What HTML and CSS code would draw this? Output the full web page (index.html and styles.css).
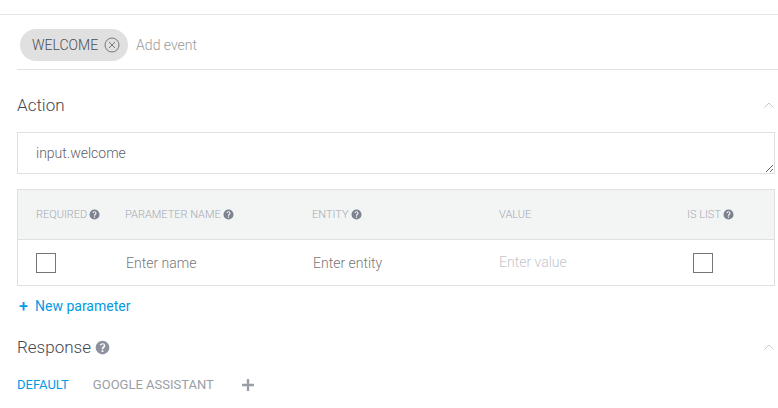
FILE: index.html
```html
<!DOCTYPE html>
<html lang="en">
<head>
  <meta charset="UTF-8">
  <meta name="viewport" content="width=device-width, initial-scale=1.0">
  <title>Intent</title>
  <link rel="stylesheet" href="styles.css">
</head>
<body>
  <div class="events">
    <div class="chips">
      <span class="chip">WELCOME
        <svg class="chip-close" width="16" height="16" viewBox="0 0 16 16"><circle cx="8" cy="8" r="7"/><path d="M5 5l6 6M11 5l-6 6"/></svg>
      </span>
      <span class="add-event">Add event</span>
    </div>
  </div>

  <div class="section-head action-head">
    <h2 class="section-title">Action</h2>
    <svg class="chevron" width="12" height="7" viewBox="0 0 12 7"><path d="M1.5 5.5L6 1l4.5 4.5"/></svg>
  </div>

  <textarea class="action-input" spellcheck="false">input.welcome</textarea>

  <div class="params">
    <div class="row row-head">
      <div class="cell">REQUIRED<svg class="help" viewBox="0 0 24 24"><use href="#q"/></svg></div>
      <div class="cell">PARAMETER NAME<svg class="help" viewBox="0 0 24 24"><use href="#q"/></svg></div>
      <div class="cell">ENTITY<svg class="help" viewBox="0 0 24 24"><use href="#q"/></svg></div>
      <div class="cell">VALUE</div>
      <div class="cell cell-list-head">IS LIST<svg class="help" viewBox="0 0 24 24"><use href="#q"/></svg></div>
    </div>
    <div class="row row-body">
      <div class="cell"><span class="box"></span></div>
      <div class="cell cell-text">Enter name</div>
      <div class="cell cell-text">Enter entity</div>
      <div class="cell cell-value">Enter value</div>
      <div class="cell cell-list"><span class="box"></span></div>
    </div>
  </div>

  <a class="new-param" href="#"><span class="plus">+</span>New parameter</a>

  <div class="section-head response-head">
    <h2 class="section-title">Response<svg class="help help-big" viewBox="0 0 24 24"><use href="#q"/></svg></h2>
    <svg class="chevron" width="12" height="7" viewBox="0 0 12 7"><path d="M1.5 5.5L6 1l4.5 4.5"/></svg>
  </div>

  <div class="tabs">
    <span class="tab active">DEFAULT</span>
    <span class="tab">GOOGLE ASSISTANT</span>
    <svg class="tab-add" width="14" height="14" viewBox="0 0 14 14"><path d="M7 1v12M1 7h12"/></svg>
  </div>

  <svg width="0" height="0" class="defs">
    <symbol id="q" viewBox="0 0 24 24">
      <path fill-rule="evenodd" d="M12 1a11 11 0 1 0 0 22 11 11 0 0 0 0-22zm-1.4 18v-2.8h2.8V19zm4.9-7.6l-1 1c-.8.8-1.1 1.3-1.1 2.3h-2.7v-.6c0-1.1.4-2 1.2-2.8l1.5-1.5c.4-.4.6-.8.6-1.3 0-1-.8-1.7-1.7-1.7s-1.7.7-1.8 1.7H7.8C7.9 6.7 9.7 5 12 5s4.4 1.8 4.4 4.1c0 .9-.4 1.7-.9 2.3z"/>
    </symbol>
  </svg>
</body>
</html>
```

FILE: styles.css
```css
body {
  margin: 0;
  font-family: Roboto, "Liberation Sans", sans-serif;
  font-weight: 300;
  color: #44474f;
  background: white;
  padding: 14px 3px 0 17px;
  overflow: hidden;
}
.defs {
  position: absolute;
}
.events {
  margin: 0 -3px 0 -17px;
  border-top: 1px solid #e6e6e6;
  padding: 14px 0 0 17px;
}
.chips {
  display: flex;
  align-items: center;
  height: 32px;
  padding: 0 0 8px 3px;
  border-bottom: 1px solid #e0e0e0;
}
.chip {
  display: flex;
  align-items: center;
  gap: 6px;
  height: 32px;
  padding: 0 8px 0 12px;
  border-radius: 16px;
  background: #e0e0e0;
  font-size: 14px;
  color: #4a4d54;
}
.chip-close {
  fill: none;
  stroke: #77797c;
  stroke-width: 1;
}
.add-event {
  margin-left: 8px;
  font-size: 14px;
  color: #9a9a9a;
}
.section-head {
  display: flex;
  justify-content: space-between;
  align-items: center;
}
.action-head {
  margin-top: 24px;
  height: 22px;
}
.section-title {
  margin: 0;
  display: flex;
  align-items: center;
  gap: 4px;
  font-size: 17px;
  font-weight: 300;
  color: #44474f;
}
.chevron {
  fill: none;
  stroke: #c9cbd0;
  stroke-width: 1;
}
.action-input {
  display: block;
  box-sizing: border-box;
  width: 758px;
  height: 42px;
  margin-top: 16px;
  padding: 12px 18px 0;
  border: 1px solid #e0e0e0;
  font-family: inherit;
  font-size: 14px;
  font-weight: 300;
  color: #5f6368;
  outline: none;
}
.params {
  width: 758px;
  box-sizing: border-box;
  margin-top: 15px;
  border: 1px solid #e0e0e0;
}
.row {
  display: grid;
  grid-template-columns: 89px 187px 187px 174px 1fr;
  align-items: center;
  padding-left: 18px;
}
.row-head {
  height: 49px;
  background: #f3f5f5;
  border-bottom: 1px solid #e0e0e0;
  font-size: 11px;
  color: #a4a8af;
}
.row-body {
  height: 45px;
  font-size: 14px;
  color: #777;
}
.cell {
  display: flex;
  align-items: center;
  white-space: pre;
}
.cell-text {
  padding-left: 1px;
}
.cell-value {
  padding-bottom: 2px;
  color: #c3c5cb;
}
.cell-list {
  padding-left: 20px;
}
.cell-list-head {
  padding-left: 14px;
}
.help {
  width: 11px;
  height: 11px;
  margin-left: 2px;
  fill: #7c8290;
}
.help-big {
  width: 15px;
  height: 15px;
  margin-left: 0;
  fill: #8e92a0;
}
.box {
  display: block;
  width: 18px;
  height: 18px;
  border: 1px solid #757575;
}
.new-param {
  display: flex;
  align-items: center;
  height: 18px;
  margin: 11px 0 0 2px;
  font-size: 14px;
  font-weight: 400;
  color: #039be5;
  text-decoration: none;
}
.plus {
  width: 16px;
  font-size: 16px;
  font-weight: 500;
}
.response-head {
  margin-top: 21px;
  height: 22px;
}
.tabs {
  display: flex;
  align-items: center;
  gap: 24px;
  margin-top: 19px;
  font-size: 13px;
  font-weight: 400;
  color: #9a9ea6;
}
.tab.active {
  color: #039be5;
}
.tab-add {
  margin-left: 3px;
  fill: none;
  stroke: #9a9ea6;
  stroke-width: 2.4;
}
```
